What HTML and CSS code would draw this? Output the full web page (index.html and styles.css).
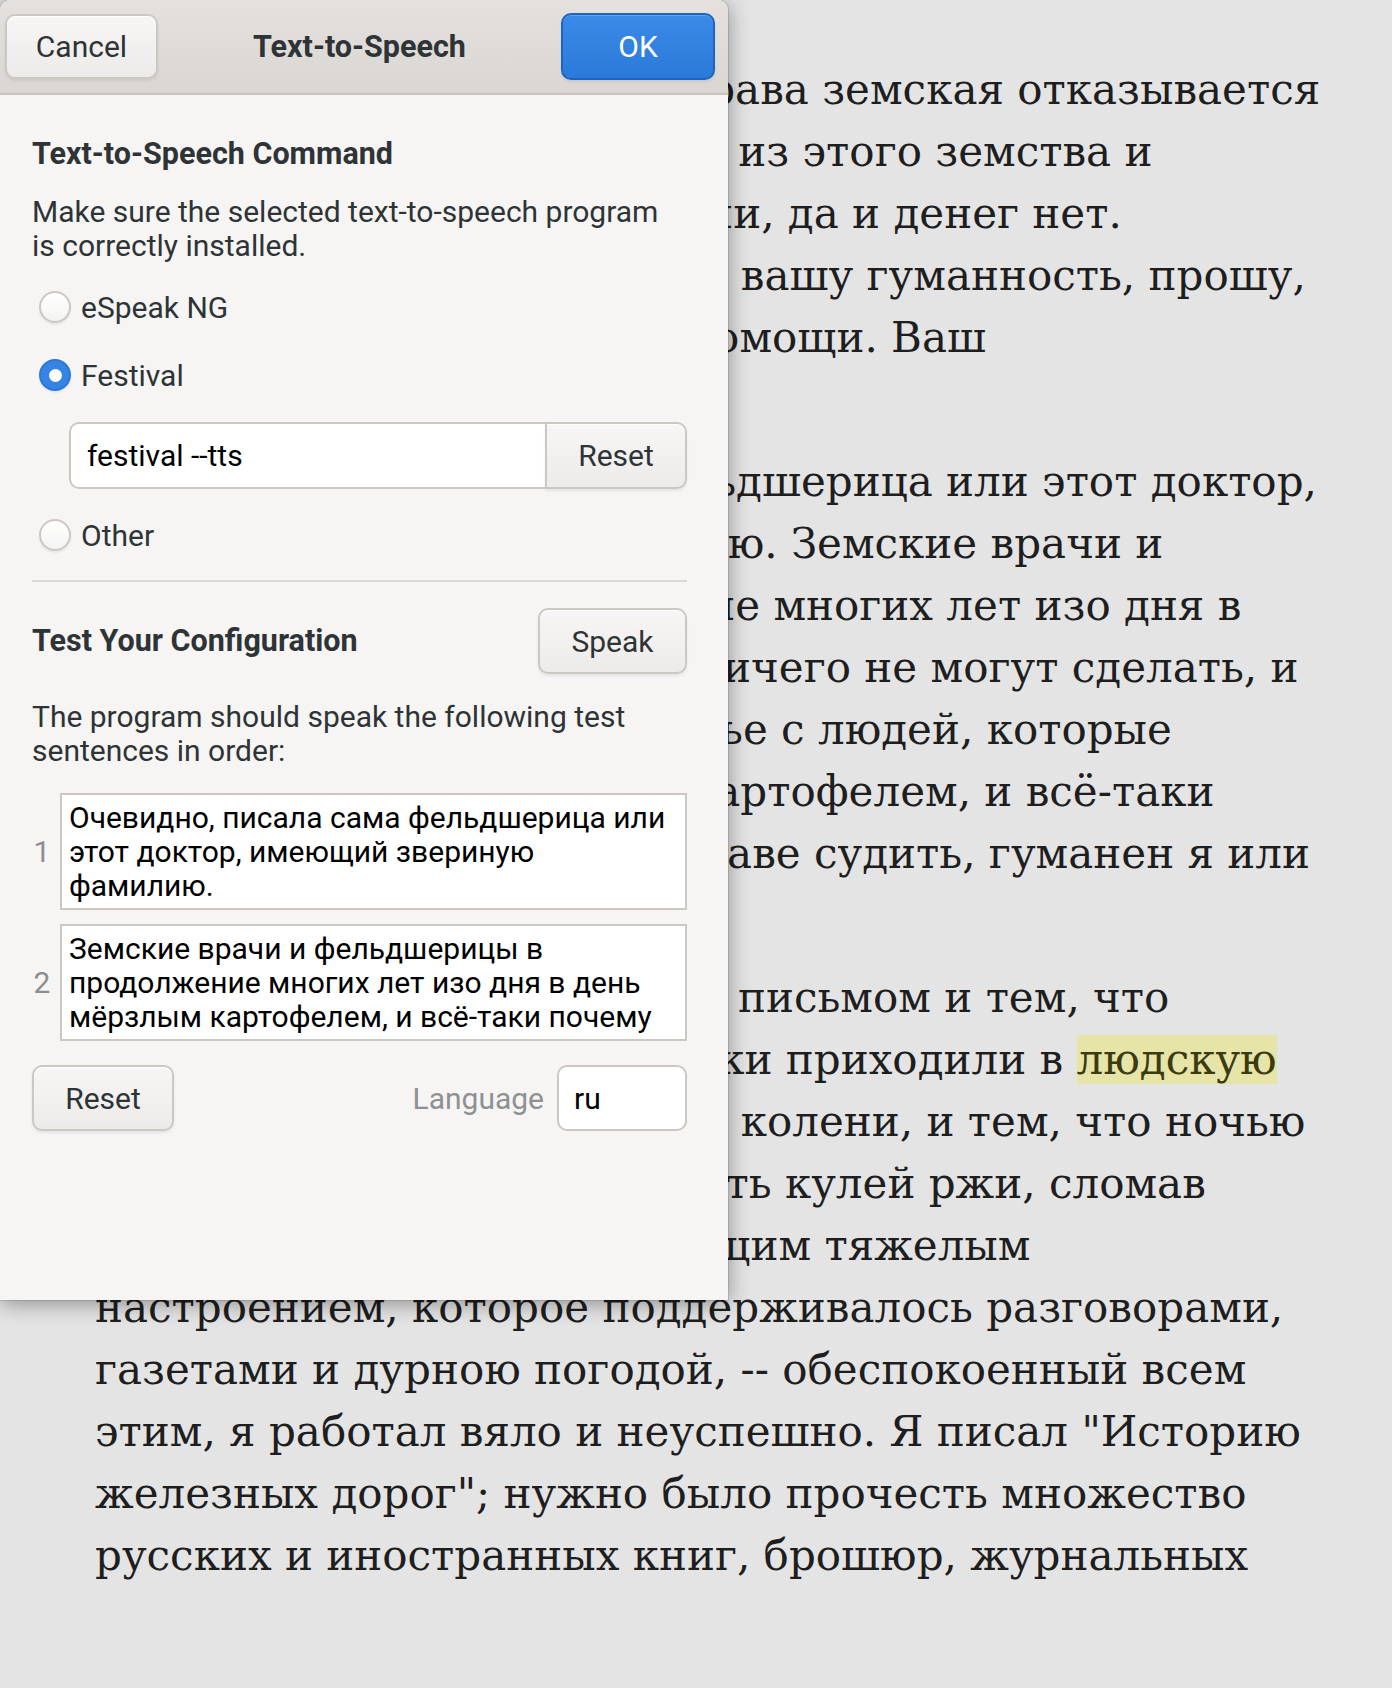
FILE: index.html
```html
<!DOCTYPE html>
<html lang="ru">
<head>
<meta charset="utf-8">
<title>Text-to-Speech</title>
<link rel="stylesheet" href="styles.css">
</head>
<body>
<main class="reader">
  <p>которого они не имеют? Управа земская отказывается<br>так как они уже исключены из этого земства и<br>числятся в Томской губернии, да и денег нет.<br>Сообщая об этом вам и зная вашу гуманность, прошу,<br>не откажите в скорейшей помощи. Ваш<br>доброжелатель.</p>
  <p>Очевидно, писала сама фельдшерица или этот доктор,<br>имеющий звериную фамилию. Земские врачи и<br>фельдшерицы в продолжение многих лет изо дня в<br>день убеждаются, что они ничего не могут сделать, и<br>всё-таки получают жалованье с людей, которые<br>питаются одним мёрзлым картофелем, и всё-таки<br>почему-то считают себя вправе судить, гуманен я или<br>нет.</p>
  <p>Обеспокоенный анонимным письмом и тем, что<br>каждое утро какие-то мужики приходили в <span class="hl">людскую</span><br>кухню и становились там на колени, и тем, что ночью<br>из амбара вытащили двадцать кулей ржи, сломав<br>предварительно стену, и общим тяжелым<br>настроением, которое поддерживалось разговорами,<br>газетами и дурною погодой, -- обеспокоенный всем<br>этим, я работал вяло и неуспешно. Я писал "Историю<br>железных дорог"; нужно было прочесть множество<br>русских и иностранных книг, брошюр, журнальных</p>
</main>

<div class="dialog">
  <header class="titlebar">
    <button class="btn btn-cancel">Cancel</button>
    <h1 class="title">Text-to-Speech</h1>
    <button class="btn btn-ok">OK</button>
  </header>

  <div class="content">
    <h2 class="heading">Text-to-Speech Command</h2>
    <p class="desc">Make sure the selected text-to-speech program<br>is correctly installed.</p>

    <div class="radio-row first"><span class="radio"></span><span class="radio-label">eSpeak NG</span></div>
    <div class="radio-row"><span class="radio checked"></span><span class="radio-label">Festival</span></div>

    <div class="cmd-row">
      <div class="entry cmd-entry">festival --tts</div>
      <button class="btn btn-joined">Reset</button>
    </div>

    <div class="radio-row other"><span class="radio"></span><span class="radio-label">Other</span></div>

    <div class="sep"></div>

    <div class="test-row">
      <h2 class="heading">Test Your Configuration</h2>
      <button class="btn btn-speak">Speak</button>
    </div>

    <p class="desc desc-test">The program should speak the following test<br>sentences in order:</p>

    <div class="sentences">
      <div class="sentence">
        <span class="num">1</span>
        <div class="textview">Очевидно, писала сама фельдшерица или<br>этот доктор, имеющий звериную<br>фамилию.</div>
      </div>
      <div class="sentence">
        <span class="num">2</span>
        <div class="textview">Земские врачи и фельдшерицы в<br>продолжение многих лет изо дня в день<br>мёрзлым картофелем, и всё-таки почему</div>
      </div>
    </div>

    <div class="bottom-row">
      <button class="btn btn-reset">Reset</button>
      <span class="lang-label">Language</span>
      <div class="entry lang-entry">ru</div>
    </div>
  </div>
</div>
</body>
</html>
```

FILE: styles.css
```css
html, body {
  margin: 0;
  padding: 0;
}

body {
  width: 1392px;
  height: 1688px;
  background: #e4e4e4;
  position: relative;
  overflow: hidden;
}

/* ---------- reading pane ---------- */
.reader {
  padding: 59px 0 0 95px;
  font-family: "DejaVu Serif", serif;
  font-size: 42px;
  line-height: 62px;
  color: #1e1e1e;
}

.reader p {
  margin: 0 0 20px 0;
  white-space: nowrap;
}

.hl {
  background: #e6e4a6;
  color: #3b3a10;
}

/* ---------- dialog ---------- */
.dialog {
  position: absolute;
  left: 0;
  top: 0;
  width: 728px;
  height: 1300px;
  background: #f6f5f4;
  border-radius: 10px 10px 0 0;
  box-shadow: 0 3px 22px rgba(0, 0, 0, 0.4), 0 0 0 1px rgba(0, 0, 0, 0.1);
  font-family: Roboto, "Noto Sans", sans-serif;
  font-size: 30px;
  color: #2e3436;
  overflow: hidden;
}

.titlebar {
  box-sizing: border-box;
  height: 95px;
  padding: 0 13px 0 5px;
  display: grid;
  grid-template-columns: auto 1fr auto;
  align-items: center;
  background: linear-gradient(to bottom, #e4e1de, #dad6d2);
  border-bottom: 2px solid #c9c3bd;
}

.title {
  margin: 0;
  text-align: center;
  font-size: 30.5px;
  font-weight: 700;
  color: #2e3436;
}

.btn {
  box-sizing: border-box;
  font-family: inherit;
  font-size: 30px;
  color: #2e3436;
  background: linear-gradient(to bottom, #f7f6f5, #edebe9);
  border: 2px solid #cdc7c2;
  border-radius: 10px;
  box-shadow: inset 0 1px #ffffff, 0 2px 3px rgba(0, 0, 0, 0.07);
  padding: 0;
  display: flex;
  align-items: center;
  justify-content: center;
}

.btn-cancel {
  width: 153px;
  height: 65px;
}

.btn-ok {
  width: 154px;
  height: 67px;
  color: #ffffff;
  background: linear-gradient(to bottom, #3a8ae8, #2b7ad9);
  border-color: #1d65c4;
  box-shadow: inset 0 1px rgba(255, 255, 255, 0.2), 0 2px 3px rgba(0, 0, 0, 0.08);
}

/* ---------- content ---------- */
.content {
  padding: 42px 41px 0 32px;
}

.heading {
  margin: 0;
  font-size: 30.5px;
  font-weight: 700;
  line-height: 34px;
  color: #2e3436;
}

.desc {
  margin: 24px 0 0 0;
  line-height: 34px;
  white-space: nowrap;
}

.radio-row {
  height: 40px;
  display: flex;
  align-items: center;
  margin-top: 28px;
  padding-left: 7px;
}

.radio-row.first {
  margin-top: 24px;
}

.radio-row.other {
  margin-top: 26px;
}

.radio {
  box-sizing: border-box;
  width: 32px;
  height: 32px;
  border-radius: 50%;
  border: 2px solid #cdc7c2;
  background: linear-gradient(to bottom, #ffffff, #f4f3f2);
  box-shadow: 0 2px 2px rgba(0, 0, 0, 0.06);
  display: flex;
  align-items: center;
  justify-content: center;
  margin-right: 10px;
}

.radio.checked {
  background: #3584e4;
  border-color: #2c77d6;
}

.radio.checked::after {
  content: "";
  width: 13px;
  height: 13px;
  border-radius: 50%;
  background: #ffffff;
}

.cmd-row {
  display: flex;
  margin: 27px 0 0 37px;
  height: 67px;
}

.entry {
  box-sizing: border-box;
  background: #ffffff;
  border: 2px solid #cdc7c2;
  color: #000000;
  display: flex;
  align-items: center;
}

.cmd-entry {
  flex: 1;
  border-radius: 10px 0 0 10px;
  border-right: none;
  padding-left: 16px;
}

.btn-joined {
  width: 142px;
  height: 67px;
  border-radius: 0 10px 10px 0;
}

.sep {
  height: 2px;
  background: #dcd8d4;
  margin-top: 25px;
}

.test-row {
  margin-top: 26px;
  height: 66px;
  display: flex;
  align-items: center;
  justify-content: space-between;
}

.btn-speak {
  width: 149px;
  height: 66px;
}

.desc-test {
  margin-top: 26px;
}

.sentences {
  margin-top: 25px;
  display: flex;
  flex-direction: column;
  gap: 14px;
}

.sentence {
  display: flex;
  align-items: center;
}

.num {
  width: 20px;
  margin-right: 8px;
  text-align: center;
  color: #8b8e8f;
}

.textview {
  flex: 1;
  box-sizing: border-box;
  height: 117px;
  background: #ffffff;
  border: 2px solid #cdc7c2;
  padding: 6px 0 0 7px;
  line-height: 34px;
  color: #000000;
  white-space: nowrap;
  overflow: hidden;
}

.bottom-row {
  margin-top: 24px;
  display: flex;
  align-items: center;
  height: 66px;
}

.btn-reset {
  width: 142px;
  height: 66px;
}

.lang-label {
  margin-left: auto;
  margin-right: 13px;
  color: #8e9192;
}

.lang-entry {
  width: 130px;
  height: 66px;
  border-radius: 10px;
  padding-left: 15px;
}
```
